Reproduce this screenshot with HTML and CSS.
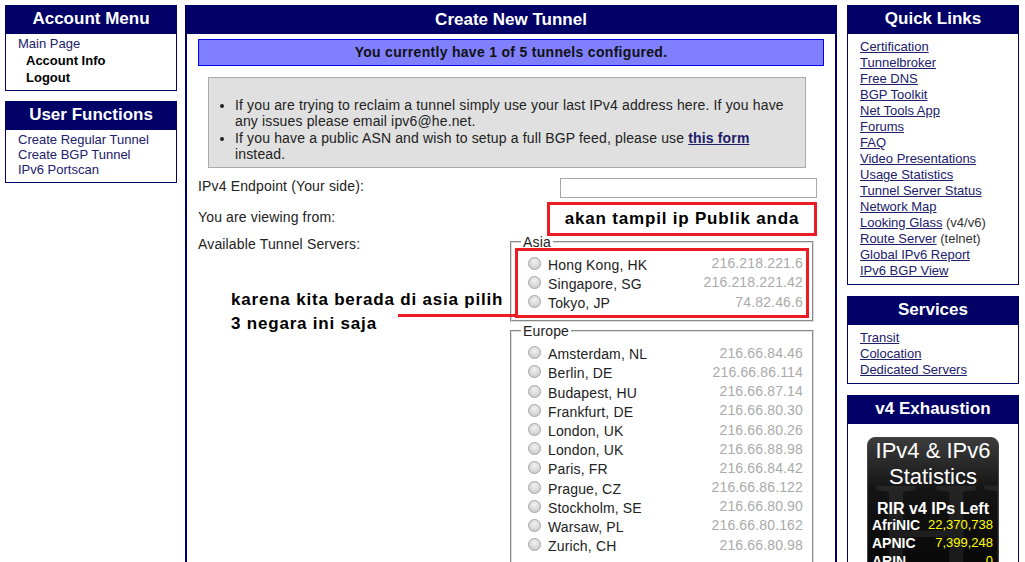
FILE: index.html
```html
<!DOCTYPE html>
<html>
<head>
    <title>Create New Tunnel</title>
    <link rel="stylesheet" href="styles.css">
</head>
<body>
<div class="page">
    <div class="side">
        <div class="box">
            <div class="box-title">Account Menu</div>
            <div class="account">
                <a href="#" class="nav">Main Page</a>
                <a href="#" class="sub">Account Info</a>
                <a href="#" class="sub">Logout</a>
            </div>
        </div>
        <div class="box">
            <div class="box-title">User Functions</div>
            <div class="functions">
                <a href="#" class="nav">Create Regular Tunnel</a>
                <a href="#" class="nav">Create BGP Tunnel</a>
                <a href="#" class="nav">IPv6 Portscan</a>
            </div>
        </div>
    </div>

    <div class="main">
        <div class="main-title">Create New Tunnel</div>
        <div class="main-body">
            <div class="notice">You currently have 1 of 5 tunnels configured.</div>
            <div class="info">
                <ul>
                    <li>If you are trying to reclaim a tunnel simply use your last IPv4 address here. If you have any issues please email ipv6@he.net.</li>
                    <li>If you have a public ASN and wish to setup a full BGP feed, please use <a href="#">this form</a> instead.</li>
                </ul>
            </div>

            <div class="form">
                <div class="row row-endpoint">
                    <label class="label">IPv4 Endpoint (Your side):</label>
                    <div class="field"><input type="text" class="endpoint"></div>
                </div>
                <div class="row row-viewing">
                    <div class="label">You are viewing from:</div>
                    <div class="field"><div class="callout">akan tampil ip Publik anda</div></div>
                </div>
                <div class="row">
                    <div class="label">Available Tunnel Servers:</div>
                    <div class="field">
                        <fieldset>
                            <legend>Asia</legend>
                            <div class="list marked">
                                <label class="server"><input type="radio" name="srv"><span class="city">Hong Kong, HK</span><span class="ip">216.218.221.6</span></label>
                                <label class="server"><input type="radio" name="srv"><span class="city">Singapore, SG</span><span class="ip">216.218.221.42</span></label>
                                <label class="server"><input type="radio" name="srv"><span class="city">Tokyo, JP</span><span class="ip">74.82.46.6</span></label>
                            </div>
                        </fieldset>
                        <fieldset class="europe">
                            <legend>Europe</legend>
                            <div class="list">
                                <label class="server"><input type="radio" name="srv"><span class="city">Amsterdam, NL</span><span class="ip">216.66.84.46</span></label>
                                <label class="server"><input type="radio" name="srv"><span class="city">Berlin, DE</span><span class="ip">216.66.86.114</span></label>
                                <label class="server"><input type="radio" name="srv"><span class="city">Budapest, HU</span><span class="ip">216.66.87.14</span></label>
                                <label class="server"><input type="radio" name="srv"><span class="city">Frankfurt, DE</span><span class="ip">216.66.80.30</span></label>
                                <label class="server"><input type="radio" name="srv"><span class="city">London, UK</span><span class="ip">216.66.80.26</span></label>
                                <label class="server"><input type="radio" name="srv"><span class="city">London, UK</span><span class="ip">216.66.88.98</span></label>
                                <label class="server"><input type="radio" name="srv"><span class="city">Paris, FR</span><span class="ip">216.66.84.42</span></label>
                                <label class="server"><input type="radio" name="srv"><span class="city">Prague, CZ</span><span class="ip">216.66.86.122</span></label>
                                <label class="server"><input type="radio" name="srv"><span class="city">Stockholm, SE</span><span class="ip">216.66.80.90</span></label>
                                <label class="server"><input type="radio" name="srv"><span class="city">Warsaw, PL</span><span class="ip">216.66.80.162</span></label>
                                <label class="server"><input type="radio" name="srv"><span class="city">Zurich, CH</span><span class="ip">216.66.80.98</span></label>
                            </div>
                        </fieldset>
                    </div>
                </div>

                <!-- annotation drawn over the screenshot -->
                <div class="note">karena kita berada di asia pilih<br>3 negara ini saja</div>
                <div class="note-line"></div>
            </div>
        </div>
    </div>

    <div class="side side-right">
        <div class="box">
            <div class="box-title">Quick Links</div>
            <div class="links">
                <a href="#">Certification</a>
                <a href="#">Tunnelbroker</a>
                <a href="#">Free DNS</a>
                <a href="#">BGP Toolkit</a>
                <a href="#">Net Tools App</a>
                <a href="#">Forums</a>
                <a href="#">FAQ</a>
                <a href="#">Video Presentations</a>
                <a href="#">Usage Statistics</a>
                <a href="#">Tunnel Server Status</a>
                <a href="#">Network Map</a>
                <span><a href="#">Looking Glass</a> (v4/v6)</span>
                <span><a href="#">Route Server</a> (telnet)</span>
                <a href="#">Global IPv6 Report</a>
                <a href="#">IPv6 BGP View</a>
            </div>
        </div>
        <div class="box">
            <div class="box-title">Services</div>
            <div class="links services">
                <a href="#">Transit</a>
                <a href="#">Colocation</a>
                <a href="#">Dedicated Servers</a>
            </div>
        </div>
        <div class="box">
            <div class="box-title">v4 Exhaustion</div>
            <div class="exhaust">
                <div class="stats">
                    <div class="stats-title">IPv4 &amp; IPv6<br>Statistics</div>
                    <div class="stats-sub">RIR v4 IPs Left</div>
                    <div class="stats-row"><span>AfriNIC</span><span class="num">22,370,738</span></div>
                    <div class="stats-row"><span>APNIC</span><span class="num">7,399,248</span></div>
                    <div class="stats-row"><span>ARIN</span><span class="num">0</span></div>
                </div>
            </div>
        </div>
    </div>
</div>
</body>
</html>
```

FILE: styles.css
```css
body {
    margin: 5px 0 0 5px;
    font-family: "Liberation Sans", Arial, sans-serif;
    font-size: 14px;
    color: #222;
    background: #fff;
}
.page {
    display: flex;
    align-items: flex-start;
}
.side {
    width: 172px;
    display: flex;
    flex-direction: column;
    gap: 10px;
}
.side-right {
    margin-left: 10px;
    gap: 11px;
}
.box {
    border: 1px solid #000066;
    background: #fff;
}
.box-title {
    background: #000066;
    color: #fff;
    font-weight: bold;
    font-size: 17px;
    height: 28px;
    line-height: 26px;
    text-align: center;
}
.account {
    padding: 1px 0 4px 12px;
    font-size: 13px;
    line-height: 17px;
}
.account a, .functions a {
    display: block;
    text-decoration: none;
}
.nav {
    color: #20206b;
}
.sub {
    color: #000;
    font-weight: bold;
    padding-left: 8px;
}
.functions {
    padding: 2px 0 5px 12px;
    font-size: 13px;
    line-height: 15px;
}

/* center column */
.main {
    width: 648px;
    margin-left: 8px;
    border: 2px solid #000066;
    border-bottom: none;
    height: 600px;
}
.main-title {
    background: #000066;
    color: #fff;
    font-weight: bold;
    font-size: 17px;
    height: 27px;
    line-height: 25px;
    text-align: center;
}
.main-body {
    padding: 5px 11px 0 11px;
    letter-spacing: 0.15px;
}
.notice {
    background: #8080ff;
    border: 1px solid #0000ee;
    height: 25px;
    line-height: 25px;
    text-align: center;
    font-weight: bold;
    font-size: 14px;
    letter-spacing: 0.3px;
    color: #111;
}
.info {
    margin: 11px 18px 0 10px;
    background: #e0e0e0;
    border: 1px solid #aaa;
    padding: 19px 10px 4px 0;
    line-height: 16.4px;
}
.info ul {
    margin: 0;
    padding-left: 26px;
}
.info a {
    color: #20206b;
    font-weight: bold;
}
.form {
    position: relative;
    margin-top: 5px;
}
.row {
    display: flex;
}
.label {
    width: 312px;
    line-height: 16px;
}
.field {
    width: 314px;
}
.row-endpoint {
    height: 26px;
}
.row-endpoint .label {
    padding-top: 5px;
}
.endpoint {
    display: block;
    margin: 5px 0 0 50px;
    width: 257px;
    height: 20px;
    box-sizing: border-box;
    border: 1px solid #a9a9a9;
    padding: 0;
}
.row-viewing {
    margin-top: 3px;
}
.row-viewing .label {
    padding-top: 7px;
}
.callout {
    margin-left: 37px;
    width: 270px;
    height: 34px;
    box-sizing: border-box;
    border: 3px solid #ed1c24;
    font-weight: bold;
    font-size: 17px;
    letter-spacing: 0.8px;
    color: #000;
    line-height: 28px;
    text-align: center;
}
fieldset {
    margin: 0;
    width: 304px;
    box-sizing: border-box;
    border: 2px groove #ddd;
    padding: 0 3px 2px 3px;
}
fieldset.europe {
    margin-top: 3px;
}
legend {
    font-size: 14px;
    line-height: 12px;
    padding: 0 2px;
    margin-left: 6px;
    color: #222;
}
.list {
    border: 3px solid transparent;
    padding: 3px 3px 4px 10px;
}
.list.marked {
    border-color: #ed1c24;
}
.server {
    display: flex;
    align-items: center;
    height: 19.2px;
}
.server input {
    appearance: none;
    width: 13px;
    height: 13px;
    margin: 0 7px 0 0;
    border: 1px solid #a4a4a4;
    border-radius: 50%;
    background: radial-gradient(circle at 50% 35%, #f2f2f2, #c4c4c4);
    box-sizing: border-box;
}
.city {
    flex: 1;
    padding-top: 3px;
}
.ip {
    color: #aaa;
}
.note {
    position: absolute;
    left: 33px;
    top: 115px;
    font-weight: bold;
    font-size: 17px;
    letter-spacing: 0.8px;
    line-height: 24px;
    color: #000;
}
.note-line {
    position: absolute;
    left: 200px;
    top: 141px;
    width: 118px;
    height: 3px;
    background: #ed1c24;
}

/* right column */
.links {
    padding: 5px 0 5px 12px;
    font-size: 13px;
    line-height: 16px;
    color: #333;
}
.links a, .links span {
    display: block;
}
.links span a {
    display: inline;
}
.links a {
    color: #20206b;
}
.services {
    padding-top: 5px;
    padding-bottom: 5px;
}
.exhaust {
    padding: 13px 0 20px 0;
    display: flex;
    justify-content: center;
}
.stats {
    position: relative;
    overflow: hidden;
    width: 132px;
    height: 150px;
    box-sizing: border-box;
    border: 1px solid #444;
    border-radius: 8px;
    background: linear-gradient(#3c3c3c, #141414 35%, #050505);
    color: #fff;
    text-align: center;
}
/* faint HE watermark behind the numbers */
.stats::before {
    content: "HE";
    position: absolute;
    left: 4px;
    top: 20px;
    font-family: "Liberation Serif", serif;
    font-size: 150px;
    line-height: 150px;
    color: rgba(255, 255, 255, 0.07);
}
.stats-title {
    position: relative;
    font-size: 22px;
    line-height: 26px;
}
.stats-sub {
    position: relative;
    font-weight: bold;
    font-size: 16px;
    line-height: 20px;
    margin: 9px 0 -3px;
}
.stats-row {
    position: relative;
    display: flex;
    justify-content: space-between;
    padding: 0 5px 0 4px;
    font-weight: bold;
    font-size: 14px;
    line-height: 18px;
}
.stats-row .num {
    color: #ffff00;
    font-weight: normal;
    font-size: 13px;
}
```
